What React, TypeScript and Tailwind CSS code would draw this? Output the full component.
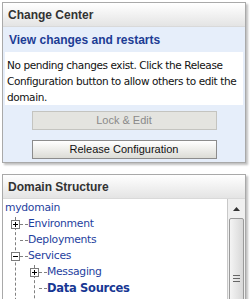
const font = { fontFamily: "'DejaVu Sans', Verdana, sans-serif" };
const headFont = { fontFamily: "'Liberation Sans', Arial, sans-serif" };
const btnFont = { fontFamily: "'Liberation Sans', Arial, sans-serif" };

function Box({ sign }: { sign: "+" | "-" }) {
  return (
    <svg width="9" height="9" viewBox="0 0 9 9" className="shrink-0">
      <rect x="0.5" y="0.5" width="8" height="8" fill="#fff" stroke="#7a7a7a" />
      <line x1="2" y1="4.5" x2="7" y2="4.5" stroke="#000" />
      {sign === "+" && <line x1="4.5" y1="2" x2="4.5" y2="7" stroke="#000" />}
    </svg>
  );
}

function Row({
  indent,
  sign,
  label,
  bold,
}: {
  indent: number;
  sign?: "+" | "-";
  label: string;
  bold?: boolean;
}) {
  return (
    <div className="relative flex h-[16.2px] items-center" style={{ paddingLeft: indent }}>
      <div className="flex w-[17px] items-center">
        {sign ? <Box sign={sign} /> : <div className="ml-[4px] w-[5px]" />}
        <div className="flex-1 border-t border-dashed border-[#808080]" />
      </div>
      <span
        className={`leading-none tracking-[-0.3px] ${bold ? "text-[11.5px] font-bold text-[#173793]" : "text-[10.8px] text-[#1f3f9e]"}`}
      >
        {label}
      </span>
    </div>
  );
}

export default function App() {
  return (
    <div className="h-[299px] w-[250px] overflow-hidden bg-white pl-[2px] pt-[2px]" style={font}>
      <div className="w-[244px] border border-[#a9a9a9] shadow-[2px_2px_2px_rgba(0,0,0,0.25)]">
        <div
          className="flex h-[23px] items-center bg-gradient-to-b from-white to-[#e4e4e4] px-[5px] text-[12px] font-bold text-[#333]"
          style={headFont}
        >
          Change Center
        </div>
        <div className="border-t border-[#d9d9d9] bg-[#e6eefa] pb-[3px]">
          <div
            className="flex h-[25px] items-center px-[6px] text-[12px] font-bold text-[#1c3c94]"
            style={headFont}
          >
            View changes and restarts
          </div>
          <div className="mx-[2px] bg-white px-[2px] pt-[5px] text-[10.5px] leading-[16px] tracking-[-0.4px] text-[#111]">
            No pending changes exist. Click the Release Configuration button to allow others to edit the domain.
          </div>
          <div className="mt-[6px] flex flex-col items-center gap-[10px]">
            <div
              className="flex h-[19px] w-[185px] items-center justify-center border border-[#c4c4c0] bg-[#e4e4e0] text-[11px] text-[#8a8a8a]"
              style={btnFont}
            >
              Lock &amp; Edit
            </div>
            <div
              className="flex h-[19px] w-[185px] items-center justify-center border border-[#8c8c8c] bg-gradient-to-b from-white to-[#dcdcd6] text-[11px] text-[#111]"
              style={btnFont}
            >
              Release Configuration
            </div>
          </div>
        </div>
      </div>

      <div className="mt-[11px] h-[200px] w-[244px] border border-[#a9a9a9] shadow-[2px_2px_2px_rgba(0,0,0,0.25)]">
        <div
          className="flex h-[24px] items-center border-b border-[#d9d9d9] bg-gradient-to-b from-white to-[#e4e4e4] px-[5px] text-[12px] font-bold text-[#333]"
          style={headFont}
        >
          Domain Structure
        </div>
        <div className="flex h-full">
          <div className="relative flex-1 pl-[2px] pt-[1px]">
            <div className="flex h-[16px] items-center text-[10.8px] tracking-[-0.3px] text-[#1f3f9e]">mydomain</div>
            <div className="absolute left-[12px] top-[18px] h-[200px] border-l border-dashed border-[#808080]" />
            <div className="absolute left-[31px] top-[66px] h-[200px] border-l border-dashed border-[#808080]" />
            <Row indent={6} sign="+" label="Environment" />
            <Row indent={6} label="Deployments" />
            <Row indent={6} sign="-" label="Services" />
            <Row indent={25} sign="+" label="Messaging" />
            <Row indent={25} label="Data Sources" bold />
          </div>
          <div className="flex w-[18px] flex-col border-l border-[#c8c8c8] bg-[#f0f0f0]">
            <div className="flex h-[19px] items-center justify-center">
              <svg width="7" height="4" viewBox="0 0 7 4">
                <polygon points="3.5,0 7,4 0,4" fill="#333" />
              </svg>
            </div>
            <div className="mx-[1px] flex h-[120px] items-center justify-center rounded-[2px] border border-[#9a9a9a] bg-gradient-to-r from-[#f4f4f4] to-[#d8d8d8]">
              <div className="flex flex-col gap-[2px]">
                <div className="h-[1px] w-[7px] bg-[#666]" />
                <div className="h-[1px] w-[7px] bg-[#666]" />
                <div className="h-[1px] w-[7px] bg-[#666]" />
              </div>
            </div>
          </div>
        </div>
      </div>
    </div>
  );
}
